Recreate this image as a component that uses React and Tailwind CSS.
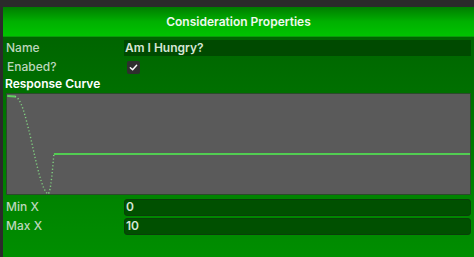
export default function App() {
  const curve =
    "M8 2.5 C14 4 18 20 24 45 C30 72 35 96 41 100 C44 100 46 70 47 60";

  return (
    <div
      className="w-[474px] h-[257px] bg-[#2b2b2b] pt-[7px] pl-[3px] overflow-hidden"
      style={{ fontFamily: "Inter, 'Noto Sans', sans-serif" }}
    >
      <div className="h-full flex flex-col bg-gradient-to-b from-[#005f00] via-[#007800] to-[#008e00]">
        {/* Header */}
        <div className="h-[30px] shrink-0 flex items-center justify-center bg-gradient-to-b from-[#007c00] via-[#00b000] to-[#00c400] border-b border-[#0a9a0a]">
          <span className="text-[12px] font-semibold text-[#eef8ee]">
            Consideration Properties
          </span>
        </div>

        <div className="flex flex-col pt-[2px] pr-[3px]">
          {/* Name */}
          <div className="flex items-center h-[18px]">
            <span className="w-[121px] pl-[3px] text-[12px] font-medium text-[#bcd6bc]">Name</span>
            <div className="flex-1 h-[16px] bg-[#004a00] flex items-center pl-[1px] text-[12px] font-semibold text-[#d6e6d6]">
              Am I Hungry?
            </div>
          </div>

          {/* Enabled */}
          <div className="flex items-center h-[18px] mt-[1px]">
            <span className="w-[121px] pl-[4px] text-[12px] font-medium text-[#bcd6bc]">Enabed?</span>
            <div className="ml-[3px] w-[13px] h-[13px] rounded-[2px] bg-[#2f2f2f] flex items-center justify-center">
              <svg width="9" height="9" viewBox="0 0 10 10">
                <path d="M1.5 5.2 L4 7.5 L8.5 2.5" fill="none" stroke="#ffffff" strokeWidth="1.6" strokeLinecap="round" strokeLinejoin="round" />
              </svg>
            </div>
          </div>

          {/* Response Curve */}
          <div className="h-[16px] flex items-center pl-[2px] text-[12px] font-semibold text-white">
            Response Curve
          </div>

          <div className="ml-[3px] mt-[1px] h-[102px] bg-[#5a5a5a] border border-[#2c4a2c]">
            <svg width="100%" height="100%" viewBox="0 0 464 100" preserveAspectRatio="none">
              <path d="M1 2 L8 2.5" fill="none" stroke="#5fd05f" strokeWidth="2" strokeLinecap="round" />
              <path d={curve} fill="none" stroke="#80d080" strokeWidth="1.4" strokeDasharray="1.2 2.2" />
              <path d="M47 60 L464 60" fill="none" stroke="#52cc52" strokeWidth="2.2" />
            </svg>
          </div>

          {/* Min X */}
          <div className="flex items-center h-[18px] mt-[3px]">
            <span className="w-[121px] pl-[3px] text-[12px] font-medium text-[#bcd6bc]">Min X</span>
            <div className="flex-1 h-[17px] rounded-[3px] bg-[#005000] border border-[#0a3e0a] flex items-center pl-[1px] text-[12px] font-semibold text-[#d6e6d6]">
              0
            </div>
          </div>

          {/* Max X */}
          <div className="flex items-center h-[18px] mt-[1px]">
            <span className="w-[121px] pl-[3px] text-[12px] font-medium text-[#bcd6bc]">Max X</span>
            <div className="flex-1 h-[17px] rounded-[3px] bg-[#005000] border border-[#0a3e0a] flex items-center pl-[1px] text-[12px] font-semibold text-[#d6e6d6]">
              10
            </div>
          </div>
        </div>
      </div>
    </div>
  );
}
